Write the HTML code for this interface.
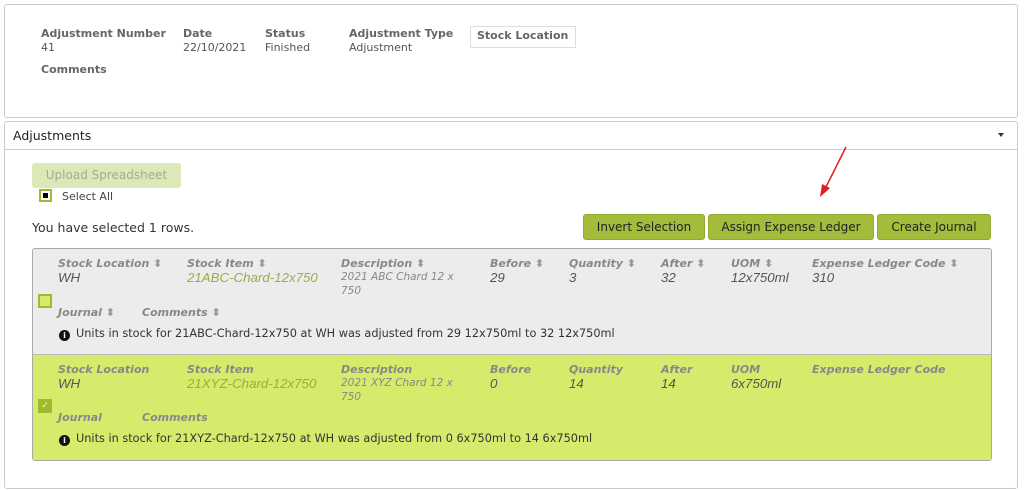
<!DOCTYPE html>
<html><head><style>
*{margin:0;padding:0;box-sizing:border-box}
body{width:1024px;height:490px;background:#fff;font-family:"DejaVu Sans","Liberation Sans",sans-serif;font-size:11px;color:#555;position:relative;overflow:hidden}
.a{position:absolute;white-space:nowrap}
.b{font-weight:bold;color:#666}
.h{font-weight:bold;font-style:italic;color:#888;font-size:11px}
.v{font-style:italic;color:#555;font-size:13.3px;font-family:"Liberation Sans",sans-serif}
.d{font-style:italic;color:#888;font-size:10.5px;line-height:14px}
.g{color:#9aad4a}
.btn{position:absolute;top:214px;height:26px;background:#a3bc3a;border:1px solid #93aa30;border-radius:3px;color:#222;font-family:"DejaVu Sans",sans-serif;font-size:12px;line-height:24px;text-align:center}
.s{color:#999;font-size:11px;font-style:normal}
.i{display:inline-block;width:11px;height:11px;border-radius:50%;background:#111;color:#fff;font-size:8px;font-weight:bold;text-align:center;line-height:11px;font-style:normal;vertical-align:-1px;margin-right:6px}
.m{font-size:11.3px}
</style></head><body>
<div class="a" style="left:4px;top:4px;width:1014px;height:114px;border:1px solid #ccc;border-radius:3px"></div>
<div class="a b" style="left:41px;top:27px">Adjustment Number</div>
<div class="a" style="left:41px;top:41px">41</div>
<div class="a b" style="left:183px;top:27px">Date</div>
<div class="a" style="left:183px;top:41px">22/10/2021</div>
<div class="a b" style="left:265px;top:27px">Status</div>
<div class="a" style="left:265px;top:41px">Finished</div>
<div class="a b" style="left:349px;top:27px">Adjustment Type</div>
<div class="a" style="left:349px;top:41px">Adjustment</div>
<div class="a b" style="left:470px;top:26px;width:106px;height:22px;border:1px solid #ddd;padding:2px 6px">Stock Location</div>
<div class="a b" style="left:41px;top:63px">Comments</div>

<div class="a" style="left:4px;top:121px;width:1014px;height:368px;border:1px solid #ccc;border-radius:3px"></div>
<div class="a" style="left:5px;top:149px;width:1012px;border-top:1px solid #ccc"></div>
<div class="a" style="left:13px;top:128px;font-size:12.5px;color:#222;font-family:'DejaVu Sans',sans-serif">Adjustments</div>
<div class="a" style="left:998px;top:133px;width:0;height:0;border-left:3px solid transparent;border-right:3px solid transparent;border-top:4px solid #333"></div>

<div class="a" style="left:32px;top:163px;width:149px;height:25px;background:#dde8b8;border-radius:3px;color:#a5ad90;font-size:12px;line-height:25px;text-align:center">Upload Spreadsheet</div>
<div class="a" style="left:39px;top:189px;width:13px;height:13px;border:2px solid #9dbb2c;background:#fff"><div style="margin:2px;width:5px;height:5px;background:#000"></div></div>
<div class="a" style="left:62px;top:190px;color:#444">Select All</div>
<div class="a" style="left:32px;top:220px;font-size:12.5px;color:#333;font-family:'DejaVu Sans',sans-serif">You have selected 1 rows.</div>

<div class="btn" style="left:583px;width:122px">Invert Selection</div>
<div class="btn" style="left:708px;width:166px">Assign Expense Ledger</div>
<div class="btn" style="left:877px;width:114px">Create Journal</div>

<svg class="a" style="left:815px;top:145px" width="35" height="60"><line x1="31" y1="2" x2="10" y2="44" stroke="#e02020" stroke-width="1.5"/><polygon points="5,52 7,39 15,43" fill="#e02020"/></svg>

<div class="a" style="left:32px;top:248px;width:960px;height:213px;border:1px solid #aaa;border-radius:3px;overflow:hidden">
<div style="position:absolute;left:0;top:0;width:960px;height:106px;background:#ececec;border-bottom:1px solid #bbb"></div>
<div style="position:absolute;left:0;top:106px;width:960px;height:107px;background:#d6eb6b"></div>
</div>

<!-- row 1 -->
<div class="a h" style="left:58px;top:257px">Stock Location <span class="s">⬍</span></div>
<div class="a v" style="left:58px;top:270px">WH</div>
<div class="a h" style="left:187px;top:257px">Stock Item <span class="s">⬍</span></div>
<div class="a v g" style="left:187px;top:270px">21ABC-Chard-12x750</div>
<div class="a h" style="left:341px;top:257px">Description <span class="s">⬍</span></div>
<div class="a d" style="left:341px;top:270px">2021 ABC Chard 12 x<br>750</div>
<div class="a h" style="left:490px;top:257px">Before <span class="s">⬍</span></div>
<div class="a v" style="left:490px;top:270px">29</div>
<div class="a h" style="left:569px;top:257px">Quantity <span class="s">⬍</span></div>
<div class="a v" style="left:569px;top:270px">3</div>
<div class="a h" style="left:661px;top:257px">After <span class="s">⬍</span></div>
<div class="a v" style="left:661px;top:270px">32</div>
<div class="a h" style="left:731px;top:257px">UOM <span class="s">⬍</span></div>
<div class="a v" style="left:731px;top:270px">12x750ml</div>
<div class="a h" style="left:812px;top:257px">Expense Ledger Code <span class="s">⬍</span></div>
<div class="a v" style="left:812px;top:270px">310</div>
<div class="a" style="left:38px;top:294px;width:14px;height:14px;border:2px solid #9dbb2c;background:#d6eb6b"></div>
<div class="a h" style="left:58px;top:306px">Journal <span class="s">⬍</span></div>
<div class="a h" style="left:142px;top:306px">Comments <span class="s">⬍</span></div>
<div class="a m" style="left:59px;top:327px;color:#333"><span class="i">i</span>Units in stock for 21ABC-Chard-12x750 at WH was adjusted from 29 12x750ml to 32 12x750ml</div>

<!-- row 2 -->
<div class="a h" style="left:58px;top:363px">Stock Location</div>
<div class="a v" style="left:58px;top:376px">WH</div>
<div class="a h" style="left:187px;top:363px">Stock Item</div>
<div class="a v" style="left:187px;top:376px;color:#9aae3a">21XYZ-Chard-12x750</div>
<div class="a h" style="left:341px;top:363px">Description</div>
<div class="a d" style="left:341px;top:376px">2021 XYZ Chard 12 x<br>750</div>
<div class="a h" style="left:490px;top:363px">Before</div>
<div class="a v" style="left:490px;top:376px">0</div>
<div class="a h" style="left:569px;top:363px">Quantity</div>
<div class="a v" style="left:569px;top:376px">14</div>
<div class="a h" style="left:661px;top:363px">After</div>
<div class="a v" style="left:661px;top:376px">14</div>
<div class="a h" style="left:731px;top:363px">UOM</div>
<div class="a v" style="left:731px;top:376px">6x750ml</div>
<div class="a h" style="left:812px;top:363px">Expense Ledger Code</div>
<div class="a" style="left:38px;top:399px;width:14px;height:14px;background:#9dbb2c;color:#eef;font-size:9px;line-height:14px;text-align:center">✓</div>
<div class="a h" style="left:58px;top:411px">Journal</div>
<div class="a h" style="left:142px;top:411px">Comments</div>
<div class="a m" style="left:59px;top:432px;color:#333"><span class="i">i</span>Units in stock for 21XYZ-Chard-12x750 at WH was adjusted from 0 6x750ml to 14 6x750ml</div>
</body></html>
